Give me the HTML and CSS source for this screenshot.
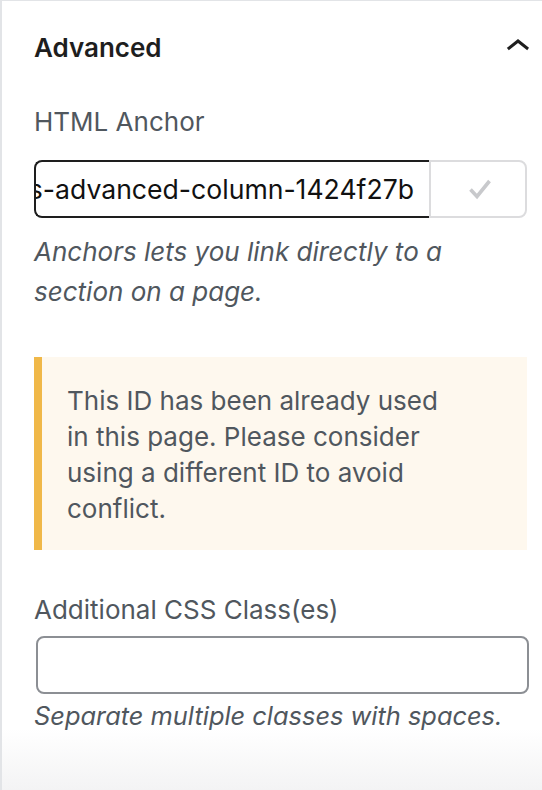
FILE: index.html
```html
<!DOCTYPE html>
<html lang="en">
<head>
    <meta charset="UTF-8">
    <meta name="viewport" content="width=device-width, initial-scale=1.0">
    <title>Advanced</title>
    <link rel="stylesheet" href="styles.css">
</head>
<body>
    <div class="panel">
        <div class="panel-header">
            <h2 class="panel-title">Advanced</h2>
            <svg class="chevron" width="48" height="48" viewBox="0 0 24 24" aria-hidden="true">
                <path d="M6.5 12.4L12 8l5.5 4.4-.9 1.2L12 10l-4.6 3.6-1-1.2z"/>
            </svg>
        </div>

        <div class="panel-body">
            <div class="field">
                <label class="field-label">HTML Anchor</label>
                <div class="anchor-row">
                    <div class="anchor-input"><span>blocks-advanced-column-1424f27b</span></div>
                    <button class="anchor-btn" type="button">
                        <svg width="24" height="24" viewBox="0 0 24 24" aria-hidden="true">
                            <path d="M2.5 12.5l6.5 7L21.5 4" fill="none" stroke="currentColor" stroke-width="3.6"/>
                        </svg>
                    </button>
                </div>
                <p class="field-help">Anchors lets you link directly to a section on a page.</p>
            </div>

            <div class="notice">
                <p>This ID has been already used in this page. Please consider using a different ID to avoid conflict.</p>
            </div>

            <div class="field">
                <label class="field-label">Additional CSS Class(es)</label>
                <div class="text-input"></div>
                <p class="field-help help-tight">Separate multiple classes with spaces.</p>
            </div>
        </div>
    </div>
</body>
</html>
```

FILE: styles.css
```css
body {
    margin: 0;
    padding: 0;
    background-color: #fff;
    font-family: Inter, "Noto Sans", sans-serif;
}

.panel {
    border-left: 2px solid #e2e4e7;
    border-top: 1px solid #e2e4e7;
    min-height: 100vh;
    box-sizing: border-box;
    background: linear-gradient(to bottom, #fff 0, #fff 728px, #f3f3f4 790px);
}

.panel-header {
    display: flex;
    justify-content: space-between;
    align-items: center;
    height: 92px;
    padding: 0 0 0 32px;
}

.panel-title {
    margin: 0;
    font-size: 26px;
    font-weight: 600;
    color: #1e1e1e;
}

.chevron {
    fill: #1e1e1e;
}

.panel-body {
    padding: 0 13px 0 32px;
}

.field-label {
    display: block;
    margin-top: 11px;
    font-size: 26px;
    line-height: 36px;
    color: #50575e;
}

.anchor-row {
    display: flex;
    margin-top: 20px;
    height: 58px;
    margin-right: 2px;
}

.anchor-input {
    flex: 1;
    display: flex;
    justify-content: flex-end;
    align-items: center;
    overflow: hidden;
    white-space: nowrap;
    border: 2px solid #1e1e1e;
    border-right: 0;
    border-radius: 8px 0 0 8px;
    padding-right: 15px;
    font-size: 26.6px;
    color: #111;
}

.anchor-btn {
    width: 98px;
    display: flex;
    justify-content: center;
    align-items: center;
    padding: 0 0 0 4px;
    background: #fff;
    border: 2px solid #dcdcde;
    border-radius: 0 8px 8px 0;
    color: #c8c9cc;
}

.field-help {
    margin: 14px 0 0;
    font-size: 26px;
    line-height: 40px;
    font-style: italic;
    color: #50575e;
}

.notice {
    margin-top: 45px;
    margin-right: 2px;
    background-color: #fef8ee;
    border-left: 8px solid #f0b849;
    padding: 26px 85px 23px 25px;
}

.notice p {
    margin: 0;
    font-size: 26px;
    line-height: 36px;
    color: #50575e;
}

.notice + .field .field-label {
    margin-top: 42px;
}

.text-input {
    margin: 8px 0 0 2px;
    height: 58px;
    box-sizing: border-box;
    border: 2px solid #8c8f94;
    border-radius: 8px;
}

.help-tight {
    margin-top: 2px;
    font-size: 25.4px;
}
```
